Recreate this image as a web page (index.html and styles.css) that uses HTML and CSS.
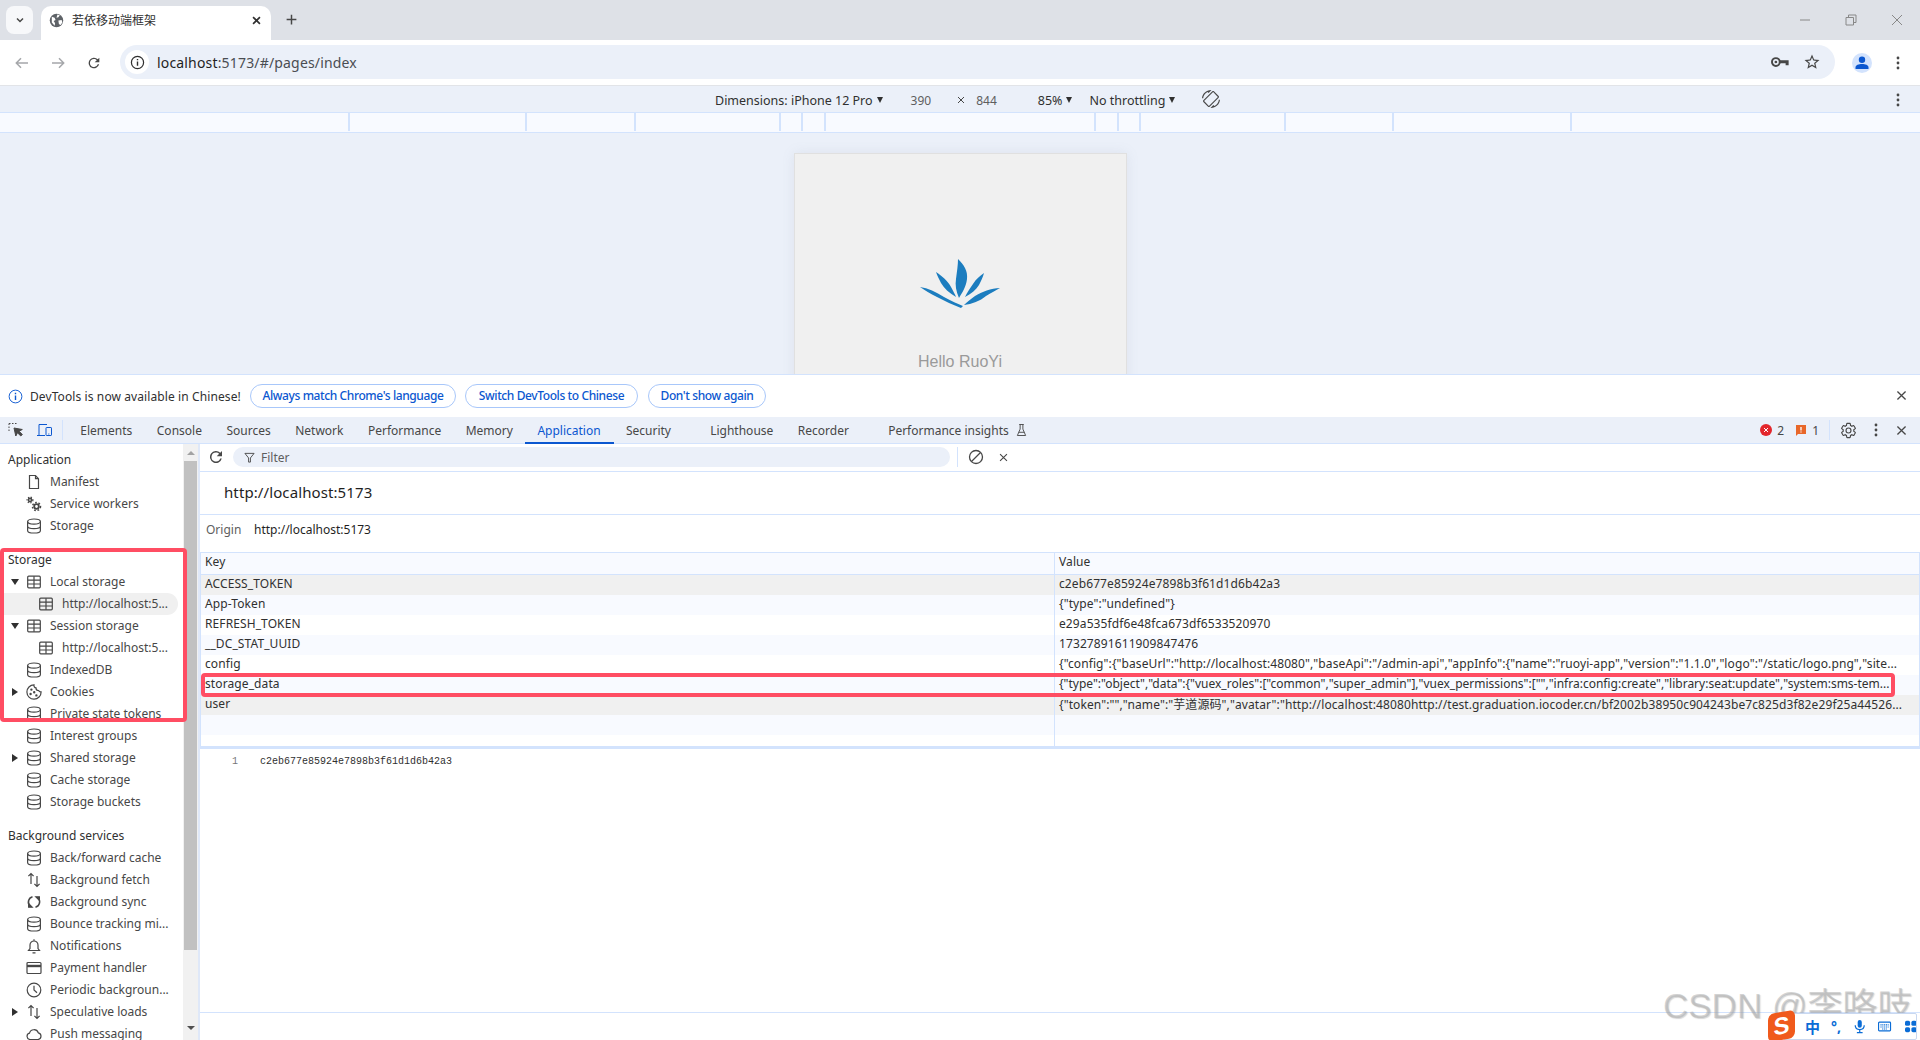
FILE: index.html
```html
<!DOCTYPE html>
<html lang="en">

<head>
    <meta charset="UTF-8">
    <title>若依移动端框架</title>
    <link rel="stylesheet" href="styles.css">
</head>

<body>
    <svg class="sprite" xmlns="http://www.w3.org/2000/svg">
        <symbol id="i-db" viewBox="0 0 16 16"><ellipse cx="8" cy="3.6" rx="6.4" ry="2.6"/><path d="M1.6 3.6v8.8c0 1.4 2.9 2.6 6.4 2.6s6.4-1.2 6.4-2.6V3.6M1.6 8c0 1.4 2.9 2.6 6.4 2.6s6.4-1.2 6.4-2.6"/></symbol>
        <symbol id="i-table" viewBox="0 0 16 16"><rect x="1.7" y="2.2" width="12.6" height="11.6" rx="1"/><path d="M1.7 6.1h12.6M1.7 10h12.6M8 2.2v11.6"/></symbol>
        <symbol id="i-doc" viewBox="0 0 16 16"><path d="M3.5 1.5h6l3 3.2v9.8h-9zM9.5 1.5v3.2h3"/></symbol>
        <symbol id="i-gears" viewBox="0 0 16 16"><circle cx="4" cy="4" r="1.6" stroke-width="1.6"/><circle cx="4" cy="4" r="2.9" stroke-width="1.2" stroke-dasharray="1.3 1.5"/><circle cx="10.5" cy="10.5" r="2.3" stroke-width="1.8"/><circle cx="10.5" cy="10.5" r="4" stroke-width="1.5" stroke-dasharray="1.7 1.7"/></symbol>
        <symbol id="i-cookie" viewBox="0 0 16 16"><path d="M8 .9a2.4 2.4 0 0 0 2 3 2.6 2.6 0 0 0 2.6 2.6 2.3 2.3 0 0 0 2.5 1.4A7.1 7.1 0 1 1 8 .9z"/><circle cx="5.4" cy="5.6" r=".6"/><circle cx="4.6" cy="10" r=".6"/><circle cx="8.2" cy="8.2" r=".6"/><circle cx="10.4" cy="11.4" r=".6"/></symbol>
        <symbol id="i-updown" viewBox="0 0 16 16"><path d="M5 12V1.5M2.4 4.2 5 1.5l2.6 2.7M11 4v10.5M8.4 11.8l2.6 2.7 2.6-2.7"/></symbol>
        <symbol id="i-sync" viewBox="0 0 16 16"><path d="M6.5 2.7A5.6 5.6 0 0 0 4 12M9.500 13.300A5.600 5.600 0 0 0 12 4" stroke-width="1.6"/><path d="M2.600 9.600v3.600h3.600zM13.400 6.400V2.800H9.800z" fill="currentColor"/></symbol>
        <symbol id="i-bell" viewBox="0 0 16 16"><path d="M2.500 12.500h11l-1.500-2V7a4 4 0 0 0-8 0v3.500zM8 1.300v1.600M6.500 14.800h3"/></symbol>
        <symbol id="i-card" viewBox="0 0 16 16"><rect x="1" y="2.500" width="14" height="11" rx="1"/><path d="M1 6h14" stroke-width="2.400"/></symbol>
        <symbol id="i-clock" viewBox="0 0 16 16"><circle cx="8" cy="8" r="6.800"/><path d="M8 3.800V8l3 2.800"/></symbol>
        <symbol id="i-cloud" viewBox="0 0 16 16"><path d="M4 13.500a3.200 3.200 0 0 1-.5-6.300 4.600 4.600 0 0 1 8.800-.4 3.400 3.400 0 0 1-.3 6.700z"/></symbol>
        <symbol id="i-reload" viewBox="0 0 24 24"><path d="M17.650 6.350A8 8 0 1 0 19.730 14h-2.080A6 6 0 1 1 12 6c1.660 0 3.140.69 4.220 1.780L13 11h7V4z"/></symbol>
        <symbol id="i-dots" viewBox="0 0 16 16"><circle cx="8" cy="3" r="1.400"/><circle cx="8" cy="8" r="1.400"/><circle cx="8" cy="13" r="1.400"/></symbol>
        <symbol id="i-close" viewBox="0 0 16 16"><path d="M3 3l10 10M13 3L3 13"/></symbol>
    </svg>

    <div class="tabstrip">
        <div class="tab-list"><svg class="icon icon-thick" viewBox="0 0 16 16"><path d="M4 6l4 4 4-4"/></svg></div>
        <div class="tab">
            <svg class="favicon" viewBox="0 0 16 16"><circle cx="8" cy="8" r="7.200" fill="#5f6368"/><path d="M3 4l3 1 1 2.500-2 1 1.500 2.500-.5 2.500-3-3.500zM9 1.500l2.500 1-1.500 2-2 .5zM10 8l3.500-.5.8 2.500-2.300 3-1.500-1.500z" fill="#fff"/></svg>
            <span class="tab-title">若依移动端框架</span>
            <svg class="icon tab-close" viewBox="0 0 16 16"><use href="#i-close"/></svg>
        </div>
        <svg class="icon new-tab" viewBox="0 0 16 16"><path d="M8 2v12M2 8h12"/></svg>
        <div class="win-controls">
            <span class="win-btn"><svg viewBox="0 0 12 12"><path d="M1 6h10"/></svg></span>
            <span class="win-btn"><svg viewBox="0 0 12 12"><path d="M1 3.500h7.500V11H1zM3.500 3.500V1H11v7.500H8.500"/></svg></span>
            <span class="win-btn"><svg viewBox="0 0 12 12"><path d="M1 1l10 10M11 1L1 11"/></svg></span>
        </div>
    </div>

    <div class="toolbar">
        <span class="nav-btn"><svg class="icon nav-off" viewBox="0 0 16 16"><path d="M14 8H2.500M7 3.200 2.300 8 7 12.800"/></svg></span>
        <span class="nav-btn"><svg class="icon nav-off" viewBox="0 0 16 16"><path d="M2 8h11.500M9 3.200 13.700 8 9 12.800"/></svg></span>
        <span class="nav-btn"><svg class="icon-fill" viewBox="0 0 24 24"><use href="#i-reload"/></svg></span>
        <div class="omnibox">
            <span class="site-info"><svg class="icon" viewBox="0 0 16 16"><circle cx="8" cy="8" r="6.500"/><path d="M8 7v4.500M8 4.200v1.400" stroke-width="1.500"/></svg></span>
            <span class="url">localhost<span class="url-rest">:5173/#/pages/index</span></span>
            <span class="omni-actions">
                <svg class="omni-icon omni-key" viewBox="0 0 24 24"><circle cx="6.500" cy="12" r="5.200" fill="none" stroke="#474747" stroke-width="2.600"/><circle cx="6.500" cy="12" r="1.800" fill="#474747"/><path d="M12 9.800h11.500v6.400h-4v-2.400H12z" fill="#474747"/></svg>
                <svg class="omni-icon" viewBox="0 0 24 24"><path fill="#474747" d="M22 9.240l-7.190-.62L12 2 9.190 8.630 2 9.240l5.460 4.730L5.820 21 12 17.270 18.180 21l-1.630-7.030L22 9.240zM12 15.400l-3.760 2.270 1-4.280-3.320-2.880 4.380-.38L12 6.100l1.710 4.040 4.380.38-3.320 2.880 1 4.280L12 15.400z"/></svg>
            </span>
        </div>
        <span class="nav-btn"><span class="avatar"><svg viewBox="0 0 20 20"><circle cx="10" cy="6.800" r="3.200" fill="#0b57d0"/><path d="M3.500 16v-1.500c0-2.300 3.200-3.400 6.500-3.400s6.500 1.100 6.500 3.400V16z" fill="#0b57d0"/></svg></span></span>
        <span class="nav-btn"><svg class="icon-fill" viewBox="0 0 16 16"><use href="#i-dots"/></svg></span>
    </div>

    <div class="device-bar">
        <span class="dev-label dev-dimensions">Dimensions: iPhone 12 Pro</span><span class="caret"></span>
        <span class="dev-size dev-w">390</span>
        <svg class="dev-times" viewBox="0 0 10 10"><path d="M2 2l6 6M8 2L2 8"/></svg>
        <span class="dev-size">844</span>
        <span class="dev-label dev-zoom">85%</span><span class="caret"></span>
        <span class="dev-label dev-throttle">No throttling</span><span class="caret"></span>
        <svg class="dev-rotate" viewBox="0 0 24 24"><path d="M16.480 2.520c3.270 1.550 5.610 4.720 5.970 8.480h1.500C23.440 4.840 18.290 0 12 0l-.66.03 3.810 3.810 1.330-1.320zm-6.250-.77c-.59-.59-1.540-.59-2.120 0L1.750 8.110c-.59.59-.59 1.540 0 2.120l12.020 12.020c.59.59 1.540.59 2.120 0l6.360-6.360c.59-.59.59-1.540 0-2.120L10.230 1.750zm4.600 19.440L2.810 9.170l6.360-6.360 12.020 12.020-6.360 6.360zm-7.310.29C4.250 19.940 1.910 16.760 1.550 13H.05C.56 19.160 5.710 24 12 24l.66-.03-3.810-3.810-1.330 1.320z"/></svg>
        <span class="dev-more"><svg class="icon-fill" viewBox="0 0 16 16"><use href="#i-dots"/></svg></span>
    </div>

    <div class="ruler">
        <span></span><span></span><span></span><span></span><span></span><span></span><span></span><span></span><span></span><span></span><span></span><span></span><span></span>
    </div>

    <div class="viewport">
        <div class="device-screen">
            <svg class="app-logo" viewBox="0 0 80 50">
                <path d="M38 0C44 6 48 12 47 20C46 28 42 34 39 39C36 32 35 26 36 20C37 12 38 6 38 0Z"/>
                <path d="M16 13C22 17 28 22 31 28C33 32 35 35 36 38C29 34 24 29 21 24C19 20 17 16 16 13Z"/>
                <path d="M64 14C60 17 56 20 53 25C50 29 47 34 45 38C51 35 56 31 59 26C61 22 63 18 64 14Z"/>
                <path d="M0 28C8 29 16 33 24 38C31 42 38 45 43 47L41 49C33 46 25 42 17 38C10 35 5 31 0 28Z"/>
                <path d="M80 29C71 29 62 33 55 37C51 40 47 43 44 46C52 45 60 42 66 37C71 34 76 31 80 29Z"/>
            </svg>
            <div class="app-hello">Hello RuoYi</div>
        </div>
    </div>

    <div class="infobar">
        <svg class="info-icon" viewBox="0 0 16 16"><circle cx="8" cy="8" r="6.800"/><path d="M8 7v4.800M8 4v1.500" stroke-width="1.500"/></svg>
        <span class="info-text">DevTools is now available in Chinese!</span>
        <span class="pill pill-first">Always match Chrome's language</span>
        <span class="pill pill-second">Switch DevTools to Chinese</span>
        <span class="pill pill-third">Don't show again</span>
        <svg class="icon info-close" viewBox="0 0 16 16"><use href="#i-close"/></svg>
    </div>

    <div class="dt-tabs">
        <svg class="dt-tool dt-tool-first" viewBox="0 0 16 16"><path d="M1 1.500h9M1 1.500v9M1 4v0" stroke-dasharray="1.500 1.500"/><path d="M6 6l1.800 8 1.700-3.200 3.300 3.200 1.500-1.500-3.200-3.300 3.200-1.700z" fill="#474747"/></svg>
        <svg class="dt-tool dt-tool-on" viewBox="0 0 16 16"><path d="M3 13V2.500h8M1 13.500h8"/><rect x="10" y="5.500" width="5.500" height="8" rx=".6"/><path d="M12.800 11.500v1"/></svg>
        <span class="dt-sep"></span>
        <span class="dt-tab">Elements</span>
        <span class="dt-tab">Console</span>
        <span class="dt-tab">Sources</span>
        <span class="dt-tab">Network</span>
        <span class="dt-tab">Performance</span>
        <span class="dt-tab">Memory</span>
        <span class="dt-tab dt-tab-active">Application</span>
        <span class="dt-tab dt-tab-wide">Security</span>
        <span class="dt-tab">Lighthouse</span>
        <span class="dt-tab dt-tab-wide">Recorder</span>
        <span class="dt-tab dt-tab-flask">Performance insights
            <svg class="flask" viewBox="0 0 12 14"><path d="M3.500 1h5M4.500 1v5L1.500 13h9L7.500 6V1M3 9.500h6"/></svg>
        </span>
        <span class="dt-status">
            <svg class="status-icon" viewBox="0 0 12 12"><circle cx="6" cy="6" r="6" fill="#e3262c"/><path d="M4 4l4 4M8 4L4 8" stroke="#fff"/></svg>
            <span class="status-num">2</span>
            <svg class="status-icon status-warn" viewBox="0 0 12 12"><path d="M1 1h10v9H3l-2 2z" fill="#e8672a"/><path d="M6 3v3.500M6 7.500v1" stroke="#fff" stroke-width="1.300"/></svg>
            <span class="status-num">1</span>
            <span class="dt-sep dt-sep-right"></span>
            <svg class="status-gear" viewBox="0 0 24 24"><path d="M19.430 12.980c.04-.32.07-.64.07-.98s-.03-.66-.07-.98l2.110-1.650c.19-.15.24-.42.12-.64l-2-3.460c-.12-.22-.39-.3-.61-.22l-2.490 1c-.52-.4-1.080-.73-1.690-.98l-.38-2.650C14.460 2.180 14.250 2 14 2h-4c-.25 0-.46.18-.49.42l-.38 2.650c-.61.25-1.170.59-1.690.98l-2.490-1c-.23-.09-.49 0-.61.22l-2 3.460c-.13.22-.07.49.12.64l2.110 1.650c-.04.32-.07.65-.07.98s.03.66.07.98l-2.110 1.650c-.19.15-.24.42-.12.64l2 3.460c.12.22.39.3.61.22l2.490-1c.52.4 1.080.73 1.690.98l.38 2.650c.03.24.24.42.49.42h4c.25 0 .46-.18.49-.42l.38-2.650c.61-.25 1.170-.59 1.690-.98l2.490 1c.23.09.49 0 .61-.22l2-3.460c.12-.22.07-.49-.12-.64l-2.110-1.650zM12 15.500c-1.930 0-3.500-1.570-3.500-3.500s1.570-3.500 3.500-3.500 3.500 1.570 3.500 3.500-1.570 3.500-3.500 3.500z"/></svg>
            <svg class="icon-fill status-dots" viewBox="0 0 16 16"><use href="#i-dots"/></svg>
            <svg class="icon status-close" viewBox="0 0 16 16"><use href="#i-close"/></svg>
        </span>
    </div>

    <div class="dt-body">
        <aside class="sidebar">
            <div class="tree">
                <div class="tree-head">Application</div>
                <div class="tree-row"><i class="tree-arrow"></i><svg class="tree-icon"><use href="#i-doc"/></svg>Manifest</div>
                <div class="tree-row"><i class="tree-arrow"></i><svg class="tree-icon"><use href="#i-gears"/></svg>Service workers</div>
                <div class="tree-row"><i class="tree-arrow"></i><svg class="tree-icon"><use href="#i-db"/></svg>Storage</div>

                <div class="tree-head tree-section">Storage</div>
                <div class="tree-row"><i class="tree-arrow down"></i><svg class="tree-icon"><use href="#i-table"/></svg>Local storage</div>
                <div class="tree-row tree-child tree-selected"><i class="tree-arrow"></i><svg class="tree-icon"><use href="#i-table"/></svg>http://localhost:5...</div>
                <div class="tree-row"><i class="tree-arrow down"></i><svg class="tree-icon"><use href="#i-table"/></svg>Session storage</div>
                <div class="tree-row tree-child"><i class="tree-arrow"></i><svg class="tree-icon"><use href="#i-table"/></svg>http://localhost:5...</div>
                <div class="tree-row"><i class="tree-arrow"></i><svg class="tree-icon"><use href="#i-db"/></svg>IndexedDB</div>
                <div class="tree-row"><i class="tree-arrow right"></i><svg class="tree-icon"><use href="#i-cookie"/></svg>Cookies</div>
                <div class="tree-row"><i class="tree-arrow"></i><svg class="tree-icon"><use href="#i-db"/></svg>Private state tokens</div>
                <div class="tree-row"><i class="tree-arrow"></i><svg class="tree-icon"><use href="#i-db"/></svg>Interest groups</div>
                <div class="tree-row"><i class="tree-arrow right"></i><svg class="tree-icon"><use href="#i-db"/></svg>Shared storage</div>
                <div class="tree-row"><i class="tree-arrow"></i><svg class="tree-icon"><use href="#i-db"/></svg>Cache storage</div>
                <div class="tree-row"><i class="tree-arrow"></i><svg class="tree-icon"><use href="#i-db"/></svg>Storage buckets</div>

                <div class="tree-head tree-section">Background services</div>
                <div class="tree-row"><i class="tree-arrow"></i><svg class="tree-icon"><use href="#i-db"/></svg>Back/forward cache</div>
                <div class="tree-row"><i class="tree-arrow"></i><svg class="tree-icon"><use href="#i-updown"/></svg>Background fetch</div>
                <div class="tree-row"><i class="tree-arrow"></i><svg class="tree-icon"><use href="#i-sync"/></svg>Background sync</div>
                <div class="tree-row"><i class="tree-arrow"></i><svg class="tree-icon"><use href="#i-db"/></svg>Bounce tracking mi...</div>
                <div class="tree-row"><i class="tree-arrow"></i><svg class="tree-icon"><use href="#i-bell"/></svg>Notifications</div>
                <div class="tree-row"><i class="tree-arrow"></i><svg class="tree-icon"><use href="#i-card"/></svg>Payment handler</div>
                <div class="tree-row"><i class="tree-arrow"></i><svg class="tree-icon"><use href="#i-clock"/></svg>Periodic backgroun...</div>
                <div class="tree-row"><i class="tree-arrow right"></i><svg class="tree-icon"><use href="#i-updown"/></svg>Speculative loads</div>
                <div class="tree-row"><i class="tree-arrow"></i><svg class="tree-icon"><use href="#i-cloud"/></svg>Push messaging</div>
            </div>
            <div class="scrollbar">
                <span class="scroll-up"></span>
                <span class="scroll-thumb"></span>
                <span class="scroll-down"></span>
            </div>
        </aside>

        <main class="main">
            <div class="filter-bar">
                <svg class="icon-fill filter-reload" viewBox="0 0 24 24"><use href="#i-reload"/></svg>
                <div class="filter-box">
                    <svg class="filter-icon" viewBox="0 0 12 12"><path d="M1 1.500h10L7 6.500V11H5V6.500z"/></svg>
                    Filter
                </div>
                <span class="filter-sep"></span>
                <svg class="icon filter-block" viewBox="0 0 16 16"><circle cx="8" cy="8" r="6.500"/><path d="M3.500 12.500l9-9"/></svg>
                <svg class="icon filter-clear" viewBox="0 0 16 16"><use href="#i-close"/></svg>
            </div>
            <div class="origin-title">http://localhost:5173</div>
            <div class="origin-row"><span class="origin-label">Origin</span>http://localhost:5173</div>

            <table class="kv-table">
                <colgroup>
                    <col class="kv-key">
                    <col>
                </colgroup>
                <tr class="kv-header"><th>Key</th><th>Value</th></tr>
                <tr class="row-grey"><td>ACCESS_TOKEN</td><td>c2eb677e85924e7898b3f61d1d6b42a3</td></tr>
                <tr class="row-tint"><td>App-Token</td><td>{"type":"undefined"}</td></tr>
                <tr><td>REFRESH_TOKEN</td><td>e29a535fdf6e48fca673df6533520970</td></tr>
                <tr class="row-tint"><td>__DC_STAT_UUID</td><td>17327891611909847476</td></tr>
                <tr><td>config</td><td>{"config":{"baseUrl":"http://localhost:48080","baseApi":"/admin-api","appInfo":{"name":"ruoyi-app","version":"1.1.0","logo":"/static/logo.png","site...</td></tr>
                <tr class="row-tint row-storage"><td>storage_data</td><td>{"type":"object","data":{"vuex_roles":["common","super_admin"],"vuex_permissions":["","infra:config:create","library:seat:update","system:sms-tem...</td></tr>
                <tr class="row-grey"><td>user</td><td>{"token":"","name":"芋道源码","avatar":"http://localhost:48080http://test.graduation.iocoder.cn/bf2002b38950c904243be7c825d3f82e29f25a44526...</td></tr>
                <tr class="row-tint"><td></td><td></td></tr>
                <tr class="row-last"><td></td><td></td></tr>
            </table>

            <div class="preview">
                <span class="preview-line">1</span>
                <span class="preview-text">c2eb677e85924e7898b3f61d1d6b42a3</span>
            </div>
            <div class="main-foot"></div>
        </main>
    </div>

    <!-- red boxes drawn over the screenshot -->
    <div class="mark mark-storage"></div>
    <div class="mark mark-row"></div>

    <div class="watermark">CSDN @李咯吱</div>
    <div class="ime">
        <span class="ime-logo">S</span>
        <span class="ime-zh">中</span>
        <span class="ime-punct">°,</span>
        <svg class="ime-icon" viewBox="0 0 14 16"><rect x="4.500" y="0" width="5" height="9.500" rx="2.500" fill="#0a6cd6"/><path d="M1.500 6.500c0 7 11 7 11 0M7 12.500V15.500M3.500 15.500h7" fill="none" stroke="#0a6cd6" stroke-width="1.500"/></svg>
        <svg class="ime-icon ime-keys" viewBox="0 0 16 14"><rect x=".7" y="1.700" width="14.600" height="10.600" rx="1" fill="none" stroke="#0a6cd6" stroke-width="1.400"/><path d="M3 5h10M3 7.500h10M5 10h6" stroke="#0a6cd6" stroke-width="1.300" stroke-dasharray="1.400 .8"/></svg>
        <svg class="ime-icon" viewBox="0 0 14 14"><rect width="6.200" height="6.200" rx="2" fill="#0a6cd6"/><rect x="7.800" width="6.200" height="6.200" rx="2" fill="#0a6cd6"/><rect y="7.800" width="6.200" height="6.200" rx="2" fill="#0a6cd6"/><rect x="7.800" y="7.800" width="6.200" height="6.200" rx="2" fill="#0a6cd6"/></svg>
    </div>
</body>

</html>
```

FILE: styles.css
```css
* {
    box-sizing: border-box;
}

html,
body {
    margin: 0;
    height: 100%;
}

body {
    position: relative;
    width: 1920px;
    height: 1040px;
    overflow: hidden;
    display: flex;
    flex-direction: column;
    background: #fff;
    color: #303030;
    font-family: "Noto Sans", "Noto Sans CJK SC", sans-serif;
    font-size: 12px;
}

.sprite {
    display: none;
}

.icon {
    width: 16px;
    height: 16px;
    fill: none;
    stroke: #474747;
    stroke-width: 1.3;
}

.icon-fill {
    width: 16px;
    height: 16px;
    fill: #474747;
}

/* browser chrome */
.tabstrip {
    height: 40px;
    flex: none;
    display: flex;
    background: #dee1e7;
}

.tab-list {
    width: 27px;
    height: 28px;
    margin: 6px 8px 0 6px;
    border-radius: 8px;
    background: #f7f8fa;
    display: flex;
    align-items: center;
    justify-content: center;
}

.tab-list .icon {
    width: 12px;
    height: 12px;
}

.icon-thick {
    stroke-width: 2;
}

.tab {
    width: 230px;
    height: 34px;
    margin-top: 6px;
    padding: 0 8px 6px;
    display: flex;
    align-items: center;
    background: #fff;
    border-radius: 10px 10px 0 0;
}

.favicon {
    width: 15px;
    height: 15px;
    flex: none;
}

.tab-title {
    margin-left: 8px;
    font-size: 12px;
    color: #303030;
}

.tab-close {
    width: 11px;
    height: 11px;
    margin-left: auto;
    margin-right: 1px;
    stroke: #303030;
    stroke-width: 2.4;
}

.new-tab {
    width: 13px;
    height: 13px;
    margin: 13px 0 0 14px;
    stroke: #474747;
    stroke-width: 1.8;
}

.win-controls {
    margin-left: auto;
    display: flex;
}

.win-btn {
    width: 46px;
    height: 40px;
    display: flex;
    align-items: center;
    justify-content: center;
}

.win-btn svg {
    width: 12px;
    height: 12px;
    fill: none;
    stroke: #888;
}

.toolbar {
    height: 46px;
    flex: none;
    display: flex;
    align-items: center;
    padding: 0 4px;
    background: #fff;
    border-bottom: 1px solid #e2e4e8;
    margin-bottom: 0;
    border-radius: 10px 10px 0 0;
    background-clip: padding-box;
}

.nav-btn {
    width: 36px;
    height: 34px;
    flex: none;
    display: flex;
    align-items: center;
    justify-content: center;
}

.nav-off {
    stroke: #a5a7aa;
    stroke-width: 1.5;
}

.omnibox {
    flex: 1;
    height: 34px;
    margin: -1px 9px 0 8px;
    padding: 0 10px 0 5px;
    display: flex;
    align-items: center;
    background: #ebf0f9;
    border-radius: 17px;
}

.site-info {
    width: 24px;
    height: 24px;
    border-radius: 50%;
    background: #fff;
    display: flex;
    align-items: center;
    justify-content: center;
}

.site-info .icon {
    width: 15px;
    height: 15px;
    stroke: #303030;
}

.url {
    margin-left: 8px;
    font-size: 14px;
    letter-spacing: 0.17px;
    color: #1f1f1f;
}

.url-rest {
    color: #4a4d52;
}

.omni-actions {
    margin-left: auto;
    display: flex;
}

.omni-icon {
    width: 26px;
    height: 18px;
}

.omni-key {
    margin-right: 6px;
}

.avatar {
    width: 20px;
    height: 20px;
    border-radius: 50%;
    background: #d3e3fd;
    overflow: hidden;
}

.device-bar {
    height: 27px;
    flex: none;
    display: flex;
    align-items: center;
    padding: 2px 0 0 715px;
    background: #ebf0f9;
    border-bottom: 1px solid #d3e3fd;
    color: #303030;
    font-size: 12.5px;
}

.caret {
    width: 0;
    height: 0;
    margin-left: 4px;
    border-left: 3.5px solid transparent;
    border-right: 3.5px solid transparent;
    border-top: 6px solid #303030;
}

.dev-size {
    color: #5e5e5e;
    font-size: 12px;
}

.dev-w {
    margin-left: 28px;
}

.dev-times {
    width: 10px;
    height: 10px;
    margin: 0 10px 0 25px;
    fill: none;
    stroke: #474747;
}

.dev-zoom {
    margin-left: 41px;
}

.dev-throttle {
    margin-left: 17px;
}

.dev-rotate {
    width: 18px;
    height: 18px;
    margin: -2px 0 0 27px;
    fill: #474747;
    transform: scaleX(-1);
}

.dev-more {
    margin-left: auto;
    margin-right: 14px;
    height: 16px;
}

.ruler {
    height: 20px;
    flex: none;
    display: grid;
    grid-template-columns: 350px 177px 109px 145px 22px 23px 270px 23px 22px 145px 108px 178px 1fr;
    background: #f8faff;
    border-bottom: 1px solid #d3e3fd;
    padding-bottom: 1px;
}

.ruler span {
    border-right: 2px solid #d3e3fd;
}

.ruler span:last-child {
    border-right: none;
}

.viewport {
    height: 242px;
    flex: none;
    padding-top: 20px;
    background: #ebf0f9;
    overflow: hidden;
    display: flex;
    justify-content: center;
    border-bottom: 1px solid #d3e3fd;
}

.device-screen {
    width: 333px;
    height: 300px;
    padding-top: 105px;
    background: #f0f0f0;
    border: 1px solid #e0e0e0;
    box-shadow: 0 0 12px rgba(120, 130, 160, 0.12);
    text-align: center;
}

.app-logo {
    display: block;
    width: 80px;
    height: 50px;
    margin: 0 auto;
    fill: #1c7dbf;
}

.app-hello {
    margin-top: 44px;
    font-family: "Liberation Sans", sans-serif;
    font-size: 16px;
    color: #9a9a9a;
}

/* devtools */
.infobar {
    height: 42px;
    flex: none;
    display: flex;
    align-items: center;
    padding: 0 0 0 8px;
    background: #fff;
}

.info-icon {
    width: 15px;
    height: 15px;
    fill: none;
    stroke: #0b57d0;
}

.info-text {
    margin-left: 7px;
    width: 220px;
    letter-spacing: 0.1px;
    white-space: nowrap;
}

.pill {
    height: 24px;
    margin-top: -1px;
    border: 1px solid #a8c7fa;
    border-radius: 12px;
    color: #0b57d0;
    font-weight: 500;
    letter-spacing: -0.4px;
    display: flex;
    align-items: center;
    justify-content: center;
    white-space: nowrap;
}

.pill-first {
    width: 206px;
}

.pill-second {
    width: 173px;
    margin-left: 9px;
}

.pill-third {
    width: 118px;
    margin-left: 10px;
}

.info-close {
    width: 13px;
    height: 13px;
    margin-left: auto;
    margin-right: 12px;
    margin-top: -1px;
    stroke-width: 1.6;
}

.dt-tabs {
    height: 27px;
    flex: none;
    display: flex;
    align-items: stretch;
    padding-left: 8px;
    background: #ebf0f9;
    border-bottom: 1px solid #d3e3fd;
}

.dt-tool {
    width: 16px;
    height: 16px;
    margin: 5px 4px 0 0;
    fill: none;
    stroke: #474747;
}

.dt-tool-first {
    margin-right: 12px;
}

.dt-tool-on {
    stroke: #0b57d0;
}

.dt-sep {
    width: 1px;
    height: 20px;
    margin: 3px 5px 0 6px;
    background: #d3e3fd;
}

.dt-tab {
    padding: 0 12.25px;
    display: flex;
    align-items: center;
    color: #474747;
    white-space: nowrap;
}

.dt-tab-active {
    color: #0b57d0;
    border-bottom: 2px solid #0b57d0;
    margin-bottom: -1px;
    padding: 1px 13px 0 12.25px;
}

.dt-tab-wide {
    padding-right: 27px;
}

.flask {
    width: 11px;
    height: 14px;
    margin-left: 7px;
    fill: none;
    stroke: #474747;
}

.dt-status {
    margin-left: auto;
    padding-right: 12px;
    display: flex;
    align-items: center;
}

.status-icon {
    width: 12px;
    height: 12px;
}

.status-num {
    margin-left: 5px;
    color: #474747;
}

.status-warn {
    margin-left: 11px;
}

.dt-sep-right {
    margin: 0 0 0 10px;
}

.status-gear {
    width: 17px;
    height: 17px;
    margin-left: 10px;
    fill: none;
    stroke: #474747;
    stroke-width: 1.6;
}

.status-dots {
    margin-left: 11px;
}

.status-close {
    width: 13px;
    height: 13px;
    margin-left: 11px;
    stroke-width: 1.6;
}

.dt-body {
    flex: 1;
    min-height: 0;
    display: flex;
}

.sidebar {
    width: 200px;
    flex: none;
    display: flex;
    border-right: 2px solid #dfe8f8;
    overflow: hidden;
}

.tree {
    width: 183px;
    flex: none;
    padding-top: 5px;
    color: #474747;
}

.tree-head {
    height: 22px;
    padding: 0 0 2px 8px;
    display: flex;
    align-items: center;
    color: #303030;
}

.tree-section {
    margin-top: 12px;
}

.tree-row {
    height: 22px;
    padding: 0 0 2px 8px;
    display: flex;
    align-items: center;
    white-space: nowrap;
}

.tree-child {
    padding-left: 20px;
}

.tree-selected {
    width: 176px;
    margin-left: 2px;
    padding-left: 18px;
    background: #f0f0f0;
    border-radius: 0 11px 11px 0;
}

.tree-arrow {
    width: 18px;
    flex: none;
    display: flex;
    margin-top: 2px;
}

.tree-arrow.down::before {
    content: "";
    margin-left: 3px;
    border-left: 4px solid transparent;
    border-right: 4px solid transparent;
    border-top: 6px solid #303030;
}

.tree-arrow.right::before {
    content: "";
    margin-left: 4px;
    border-top: 4px solid transparent;
    border-bottom: 4px solid transparent;
    border-left: 6px solid #303030;
}

.tree-icon {
    width: 16px;
    height: 16px;
    flex: none;
    margin: 2px 8px 0 0;
    fill: none;
    stroke: #474747;
    stroke-width: 1.2;
}

.scrollbar {
    width: 15px;
    flex: none;
    display: flex;
    flex-direction: column;
    align-items: center;
    background: #f1f1f1;
}

.scroll-up,
.scroll-down {
    width: 0;
    height: 0;
    border-left: 4px solid transparent;
    border-right: 4px solid transparent;
}

.scroll-up {
    margin: 7px 0 6px;
    border-bottom: 4px solid #a3a3a3;
}

.scroll-thumb {
    width: 13px;
    height: 489px;
    background: #c1c1c1;
}

.scroll-down {
    margin-top: 76px;
    border-top: 4px solid #505050;
}

.main {
    flex: 1;
    min-width: 0;
    display: flex;
    flex-direction: column;
}

.filter-bar {
    height: 28px;
    flex: none;
    display: flex;
    align-items: center;
    border-bottom: 1px solid #d3e3fd;
    padding-bottom: 1px;
}

.filter-reload {
    width: 18px;
    height: 18px;
    margin-left: 7px;
}

.filter-box {
    width: 717px;
    height: 20px;
    margin-left: 8px;
    padding-left: 11px;
    display: flex;
    align-items: center;
    background: #ebf0f9;
    border-radius: 10px;
    color: #5e5e5e;
}

.filter-icon {
    width: 11px;
    height: 11px;
    margin-right: 6px;
    fill: none;
    stroke: #474747;
}

.filter-sep {
    width: 1px;
    height: 20px;
    margin-left: 7px;
    background: #d3e3fd;
}

.filter-block {
    width: 16px;
    height: 16px;
    margin-left: 10px;
}

.filter-clear {
    width: 11px;
    height: 11px;
    margin-left: 14px;
    stroke-width: 1.6;
}

.origin-title {
    height: 43px;
    flex: none;
    padding: 0 0 2px 24px;
    display: flex;
    align-items: center;
    font-size: 15px;
    letter-spacing: 0.1px;
    color: #1f1f1f;
    border-bottom: 1px solid #d3e3fd;
}

.origin-row {
    height: 37px;
    flex: none;
    padding: 0 0 8px 6px;
    display: flex;
    align-items: center;
    color: #1f1f1f;
}

.origin-label {
    width: 48px;
    color: #5e5e5e;
}

.kv-table {
    width: 100%;
    height: 197px;
    flex: none;
    table-layout: fixed;
    border-collapse: collapse;
    border: 1px solid #d3e3fd;
    border-bottom: 3px solid #d3e3fd;
}

.kv-key {
    width: 854px;
}

.kv-table th,
.kv-table td {
    padding: 0 4px 2px;
    height: 20px;
    border-left: 1px solid #d3e3fd;
    font-weight: 400;
    letter-spacing: 0.1px;
    text-align: left;
    color: #303030;
    white-space: nowrap;
    overflow: hidden;
}

.kv-table td:first-child,
.kv-table th:first-child {
    border-left: none;
}

.kv-table .row-storage td:last-child {
    letter-spacing: 0;
}

.kv-header th {
    height: 21px;
    padding-bottom: 4px;
    background: #f8faff;
    border-bottom: 1px solid #d3e3fd;
}

.row-grey td {
    background: #f0f0f0;
}

.row-tint td {
    background: #f8faff;
}

.row-last td {
    height: 13px;
}

.preview {
    height: 25px;
    flex: none;
    display: flex;
    align-items: center;
    font-family: "Liberation Mono", monospace;
    font-size: 10px;
    color: #303030;
}

.preview-line {
    width: 60px;
    padding-left: 32px;
    color: #777;
}

.main-foot {
    flex: none;
    margin-top: 238px;
    border-top: 1px solid #d3e3fd;
}

/* overlays */
.mark {
    position: absolute;
    border: 4px solid #ff4d63;
    border-radius: 4px;
}

.mark-storage {
    left: 0;
    top: 548px;
    width: 187px;
    height: 174px;
}

.mark-row {
    left: 201px;
    top: 673px;
    width: 1694px;
    height: 24px;
}

.watermark {
    position: absolute;
    left: 1663px;
    top: 984px;
    font-family: "Liberation Sans", "Noto Sans CJK SC", sans-serif;
    font-size: 35px;
    line-height: 44px;
    white-space: nowrap;
    color: rgba(170, 170, 170, 0.5);
    text-shadow: 1px 1px 1px rgba(120, 120, 120, 0.3);
}

.ime {
    position: absolute;
    left: 1783px;
    top: 1013px;
    width: 134px;
    height: 27px;
    display: flex;
    align-items: center;
    padding-left: 21px;
    background: #fff;
    border: 1px solid #c9d8f0;
    border-radius: 2px;
    color: #0a6cd6;
}

.ime-logo {
    position: absolute;
    left: -16px;
    top: -2px;
    width: 27px;
    height: 28px;
    border-radius: 6px;
    background: #f05a1c;
    color: #fff;
    font-family: "Liberation Sans", sans-serif;
    font-size: 24px;
    font-weight: 700;
    line-height: 28px;
    text-align: center;
    transform: skewY(-10deg);
}

.ime-zh {
    font-size: 15px;
    font-weight: 700;
}

.ime-punct {
    margin-left: 11px;
    font-size: 14px;
    font-weight: 700;
}

.ime-icon {
    width: 14px;
    height: 15px;
    margin-left: 13px;
}

.ime-keys {
    width: 16px;
}
```
